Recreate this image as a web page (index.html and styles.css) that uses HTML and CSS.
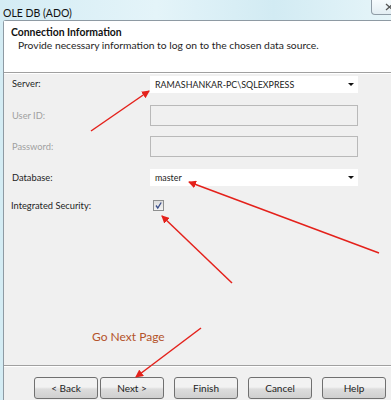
FILE: index.html
```html
<!DOCTYPE html>
<html lang="en">
<head>
  <meta charset="UTF-8" />
  <title>OLE DB (ADO)</title>
  <link rel="stylesheet" href="styles.css">
</head>
<body>
  <div class="window">
    <div class="titlebar">
      <span class="title">OLE DB (ADO)</span>
      <span class="close">
        <svg width="9" height="8" viewBox="0 0 9 8"><path d="M1 1 L8 7 M8 1 L1 7" stroke="#555" stroke-width="1.3" fill="none"/></svg>
      </span>
    </div>

    <div class="frame">
      <div class="header">
        <h1>Connection Information</h1>
        <p>Provide necessary information to log on to the chosen data source.</p>
      </div>

      <div class="content">
        <div class="form">
          <div class="row">
            <label class="first">Server:</label>
            <div class="combo">RAMASHANKAR-PC\SQLEXPRESS<span class="caret"></span></div>
          </div>
          <div class="row">
            <label class="disabled">User ID:</label>
            <div class="textbox"></div>
          </div>
          <div class="row">
            <label class="disabled">Password:</label>
            <div class="textbox"></div>
          </div>
          <div class="row">
            <label>Database:</label>
            <div class="combo">master<span class="caret"></span></div>
          </div>
          <div class="row check-row">
            <label>Integrated Security:</label>
            <span class="checkbox">
              <svg width="9" height="9" viewBox="0 0 9 9"><path d="M2 4.5 L3.8 7 L7.2 1.5" stroke="#3b4f8a" stroke-width="1.3" fill="none"/></svg>
            </span>
          </div>
        </div>

        <div class="note">Go Next Page</div>
      </div>

      <div class="footer">
        <div class="pair">
          <button>&lt; Back</button>
          <button>Next &gt;</button>
        </div>
        <button>Finish</button>
        <button>Cancel</button>
        <button>Help</button>
      </div>
    </div>

    <!-- red annotation arrows drawn over the dialog -->
    <svg class="annotations" width="391" height="400" viewBox="0 0 391 400">
      <defs>
        <marker id="head" markerWidth="8" markerHeight="8" refX="7" refY="4" orient="auto" markerUnits="userSpaceOnUse">
          <path d="M0 0 L8 4 L0 8 Z" fill="#e4211b"/>
        </marker>
      </defs>
      <g stroke="#e4211b" stroke-width="1.5" fill="none" marker-end="url(#head)">
        <line x1="91" y1="131" x2="149" y2="91"/>
        <line x1="379" y1="253" x2="189" y2="182"/>
        <line x1="232" y1="283" x2="162" y2="216"/>
        <line x1="201" y1="328" x2="136" y2="377"/>
      </g>
    </svg>
  </div>
</body>
</html>
```

FILE: styles.css
```css
* {
  margin: 0;
  padding: 0;
  box-sizing: border-box;
}

body {
  width: 391px;
  height: 400px;
  overflow: hidden;
  font-family: Lato, 'Open Sans', sans-serif;
  font-size: 10px;
  color: #1e1e1e;
}

.window {
  position: relative;
  height: 400px;
  display: flex;
  flex-direction: column;
  background: linear-gradient(90deg, #d4ecf4, #e4f4f9 40%, #d2ebf3 70%, #e6f5f9);
}

.titlebar {
  height: 20px;
  display: flex;
  justify-content: space-between;
  align-items: flex-start;
}

.title {
  padding: 6px 0 0 3px;
  font-size: 10.5px;
  line-height: 14px;
  color: #111;
}

.close {
  width: 24px;
  height: 15px;
  margin-right: -4px;
  border: 1px solid #8f9ca6;
  border-top: none;
  border-radius: 0 0 0 4px;
  background: linear-gradient(#f6fbfd, #e3eef3);
  display: flex;
  align-items: center;
  padding-left: 13px;
}

.frame {
  flex: 1;
  margin-left: 3px;
  border-left: 1px solid #8e9aa3;
  border-top: 1px solid #8e9aa3;
  border-top-left-radius: 3px;
  background: #f0f0f0;
  display: flex;
  flex-direction: column;
}

.header {
  height: 52px;
  background: #fff;
  border-bottom: 1px solid #a0a0a0;
  padding: 4px 0 0 7px;
}

.header h1 {
  font-size: 10.4px;
  font-weight: bold;
  line-height: 14px;
  color: #111;
}

.header p {
  padding-left: 7px;
  font-size: 10.3px;
  line-height: 13px;
}

.content {
  flex: 1;
  display: flex;
  flex-direction: column;
  border-top: 1px solid #fff;
}

.form {
  padding: 0 0 0 8px;
  display: flex;
  flex-direction: column;
  gap: 10px;
}

.row {
  display: grid;
  grid-template-columns: 138px 208px;
  align-items: center;
  height: 21px;
}

.row label {
  font-size: 9.3px;
  line-height: 14px;
}

.row label.first {
  margin-top: -2px;
}

.row label.disabled {
  color: #a0a0a0;
}

.combo {
  height: 17px;
  margin-top: -1px;
  background: #fff;
  padding-left: 5px;
  font-size: 8.9px;
  line-height: 17px;
  display: flex;
  justify-content: space-between;
  align-items: center;
  color: #222;
}

.caret {
  width: 0;
  height: 0;
  margin-right: 4px;
  border-left: 3px solid transparent;
  border-right: 3px solid transparent;
  border-top: 3px solid #111;
}

.textbox {
  height: 21px;
  border: 1px solid #b9b9b9;
  background: #f0f0f0;
}

.check-row {
  align-items: start;
}

.check-row label {
  margin-top: 1px;
  margin-left: -1px;
}

.checkbox {
  width: 11px;
  height: 11px;
  margin-left: 3px;
  margin-top: 2px;
  border: 1px solid #8e8f8f;
  background: linear-gradient(#dcdcdc, #f4f4f4);
  display: flex;
  align-items: center;
  justify-content: center;
}

.note {
  margin-top: auto;
  margin-bottom: 20px;
  padding-left: 88px;
  font-size: 12px;
  line-height: 16px;
  color: #b4532a;
}

.footer {
  height: 35px;
  border-top: 1px solid #a0a0a0;
  box-shadow: inset 0 1px 0 #fff;
  padding: 11px 0 0 30px;
  display: flex;
  gap: 10px;
}

.pair {
  display: flex;
  gap: 2px;
}

button {
  width: 64px;
  height: 22px;
  font-family: Lato, 'Open Sans', sans-serif;
  font-size: 10px;
  color: #1e1e1e;
  border: 1px solid #707070;
  border-radius: 3px;
  background: linear-gradient(#f2f2f2 45%, #dddddd 55%, #cfcfcf);
}

.annotations {
  position: absolute;
  top: 0;
  left: 0;
  pointer-events: none;
}
```
